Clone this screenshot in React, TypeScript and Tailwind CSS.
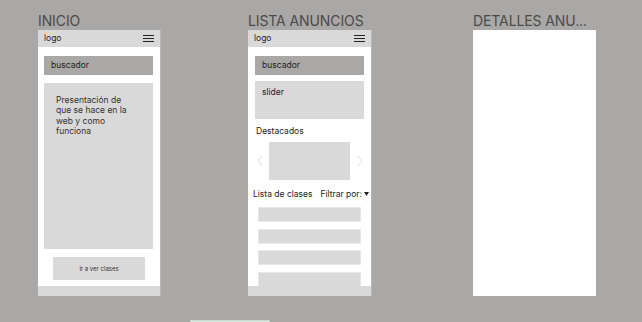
import { ReactNode } from "react";

function Menu() {
  return (
    <div className="flex flex-col gap-[1.5px] w-[11px]">
      <span className="block h-[1.5px] bg-[#222]" />
      <span className="block h-[1.5px] bg-[#222]" />
      <span className="block h-[1.5px] bg-[#222]" />
    </div>
  );
}

function Phone({ children, plain, w }: { children?: ReactNode; plain?: boolean; w: string }) {
  if (plain) {
    return <div className={w + " h-[266px] bg-white"} />;
  }
  return (
    <div className={w + " h-[266px] bg-white flex flex-col shadow-[1px_0_0_#b9b8b6]"}>
      <div className="h-[17px] shrink-0 bg-[#d9d9d9] flex items-center justify-between pl-[6px] pr-[6px]">
        <span className="text-[8.5px] text-[#222]">logo</span>
        <Menu />
      </div>
      <div className="flex-1 min-h-0 flex flex-col overflow-hidden">{children}</div>
      <div className="h-[10px] shrink-0 bg-[#d9d9d9]" />
    </div>
  );
}

function Column({ title, children, className }: { title: string; children: ReactNode; className?: string }) {
  return (
    <div className={"flex flex-col " + (className ?? "")}>
      <div className="h-[18px] leading-[18px] text-[14px] text-[#4a4a4a] tracking-[-0.1px] whitespace-nowrap">{title}</div>
      {children}
    </div>
  );
}

function Chevron({ dir }: { dir: "left" | "right" }) {
  return (
    <svg width="6" height="12" viewBox="0 0 6 12" fill="none">
      <path
        d={dir === "left" ? "M5 1 L1 6 L5 11" : "M1 1 L5 6 L1 11"}
        stroke="#dedede"
        strokeWidth="1"
      />
    </svg>
  );
}

export default function App() {
  return (
    <div
      className="w-[642px] h-[322px] bg-[#a9a8a6] overflow-hidden pt-[12px]"
      style={{ fontFamily: "Inter, 'Noto Sans', sans-serif" }}
    >
      <div className="flex items-start pl-[38px]">
        {/* Inicio */}
        <Column title="INICIO">
          <Phone w="w-[122px]">
            <div className="shrink-0 mt-[9px] ml-[6px] w-[109px] h-[19px] bg-[#a9a8a6] flex items-center pl-[7px] text-[8.5px] text-[#222]">
              buscador
            </div>
            <div className="shrink-0 mt-[8px] ml-[6px] w-[109px] h-[166px] bg-[#d9d9d9] pt-[12px] pl-[12px]">
              <p className="w-[80px] text-[8.5px] leading-[10.4px] text-[#333]">
                Presentación de que se hace en la web y como funciona
              </p>
            </div>
            <div className="shrink-0 mt-[8px] ml-[15px] w-[92px] h-[23px] bg-[#d9d9d9] flex items-center justify-center text-[6px] text-[#333]">
              ir a ver clases
            </div>
          </Phone>
        </Column>

        {/* Lista anuncios */}
        <Column title="LISTA ANUNCIOS" className="ml-[88px]">
          <Phone w="w-[123px]">
            <div className="shrink-0 mt-[9px] ml-[7px] w-[109px] h-[19px] bg-[#a9a8a6] flex items-center pl-[7px] text-[8.5px] text-[#222]">
              buscador
            </div>
            <div className="shrink-0 mt-[6px] ml-[7px] w-[109px] h-[38px] bg-[#d9d9d9] pt-[5px] pl-[7px] text-[8.5px] text-[#222]">
              slider
            </div>
            <div className="shrink-0 mt-[6px] ml-[8px] text-[8.5px] leading-[12px] text-[#222]">Destacados</div>
            <div className="shrink-0 mt-[5px] flex items-center ml-[9px]">
              <Chevron dir="left" />
              <div className="ml-[6px] w-[81px] h-[38px] bg-[#d9d9d9]" />
              <div className="ml-[7px]">
                <Chevron dir="right" />
              </div>
            </div>
            <div className="shrink-0 mt-[8px] flex items-center justify-between pl-[5px] pr-[2px] text-[8.5px] leading-[12px] text-[#222] whitespace-nowrap">
              <span>Lista de clases</span>
              <span className="flex items-center gap-[2px]">
                Filtrar por:
                <svg width="5" height="4" viewBox="0 0 5 4">
                  <path d="M0 0 H5 L2.5 4 Z" fill="#222" />
                </svg>
              </span>
            </div>
            <div className="shrink-0 mt-[7px] ml-[10px] w-[103px] flex flex-col gap-[6.5px]">
              <div className="h-[15px] bg-[#d9d9d9] border border-[#e8e8e8]" />
              <div className="h-[15px] bg-[#d9d9d9] border border-[#e8e8e8]" />
              <div className="h-[15px] bg-[#d9d9d9] border border-[#e8e8e8]" />
              <div className="h-[20px] bg-[#d9d9d9] border border-[#e8e8e8]" />
            </div>
          </Phone>
        </Column>

        {/* Detalles anuncio */}
        <Column title="DETALLES ANU..." className="ml-[102px]">
          <Phone w="w-[123px]" plain />
        </Column>
      </div>
      <div className="mt-[24px] ml-[190px] w-[80px] h-[10px] bg-[#dcebe4] border border-[#c5d6ce]" />
    </div>
  );
}
